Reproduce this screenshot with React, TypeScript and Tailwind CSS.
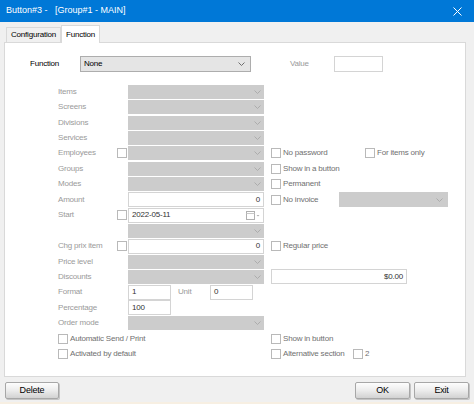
import type { ReactNode } from "react";

const font = { fontFamily: '"Liberation Sans", Arial, sans-serif' };

function Chevron({ color = "#a8a8a8" }: { color?: string }) {
  return (
    <svg width="7" height="4" viewBox="0 0 7 4" className="shrink-0">
      <path d="M0.5 0.5L3.5 3.5L6.5 0.5" fill="none" stroke={color} strokeWidth="0.9" />
    </svg>
  );
}

function Check() {
  return <span className="block h-[10px] w-[10px] shrink-0 border border-[#b9b9b9] bg-white" />;
}

function GraySelect({ className = "w-[136px]" }: { className?: string }) {
  return (
    <div className={`flex h-[14px] items-center justify-end bg-[#cccccc] pr-[3px] ${className}`}>
      <Chevron />
    </div>
  );
}

function TextBox({ value, className = "w-[136px]", right = false }: { value: string; className?: string; right?: boolean }) {
  return (
    <div
      className={`flex h-[15px] items-center border border-[#d4d4d4] bg-white px-[3px] text-[#333] ${right ? "justify-end" : ""} ${className}`}
    >
      {value}
    </div>
  );
}

function CheckLabel({ label, className = "" }: { label: string; className?: string }) {
  return (
    <div className={`flex items-center gap-[2px] text-[#707070] ${className}`}>
      <Check />
      <span>{label}</span>
    </div>
  );
}

function Row({ label, check, control, side }: { label?: ReactNode; check?: boolean; control?: ReactNode; side?: ReactNode }) {
  return (
    <div className="flex h-[15.45px] items-center">
      <div className="w-[59px] shrink-0 text-[#9a9a9a]">{label}</div>
      <div className="w-[11px] shrink-0">{check && <Check />}</div>
      <div className="flex w-[136px] shrink-0 items-center">{control}</div>
      <div className="ml-[7px] flex items-center">{side}</div>
    </div>
  );
}

function DateBox() {
  return (
    <div className="flex h-[15px] w-[136px] items-center border border-[#d4d4d4] bg-white pl-[3px] pr-[3px] text-[#333]">
      <span className="flex-1">2022-05-11</span>
      <svg width="14" height="9" viewBox="0 0 14 9">
        <rect x="0.5" y="0.5" width="8" height="8" fill="none" stroke="#b0b0b0" />
        <line x1="0.5" y1="2.5" x2="8.5" y2="2.5" stroke="#c8c8c8" />
        <path d="M10.5 4L12 5.5L13.5 4Z" fill="#b0b0b0" />
      </svg>
    </div>
  );
}

function WinButton({ label, className = "" }: { label: string; className?: string }) {
  return (
    <button
      className={`h-[17px] rounded-[2px] border border-[#a7a7a7] bg-gradient-to-b from-[#fdfdfd] via-[#ececec] to-[#d2d2d2] text-[9px] text-black shadow-[1px_1px_0_#c4c4c4] ${className}`}
    >
      {label}
    </button>
  );
}

export default function App() {
  return (
    <div className="flex h-[404px] w-[474px] flex-col overflow-hidden bg-[#f0f0f0] text-[8px] tracking-[-0.2px]" style={font}>
      {/* title bar */}
      <div className="flex h-[22px] shrink-0 items-center bg-[#0078d7] pl-[6px] pr-[12px] text-[9px] tracking-normal text-white">
        <span className="flex-1 whitespace-pre">Button#3 -   [Group#1 - MAIN]</span>
        <svg width="9" height="9" viewBox="0 0 9 9">
          <path d="M0.5 0.5L8.5 8.5M8.5 0.5L0.5 8.5" stroke="#fff" strokeWidth="1" />
        </svg>
      </div>

      {/* tabs */}
      <div className="flex h-[20px] shrink-0 items-end pl-[6px]">
        <div className="flex h-[15px] items-center border border-b-0 border-[#d9d9d9] bg-[#f0f0f0] px-[4px] text-black">
          Configuration
        </div>
        <div className="relative -mb-px flex h-[18px] items-center border border-b-0 border-[#d9d9d9] bg-white px-[4px] text-black">
          Function
        </div>
      </div>

      {/* tab page */}
      <div className="ml-[4px] h-[335px] w-[462px] shrink-0 border border-[#d9d9d9] bg-white pt-[13px]">
        <div className="flex h-[16px] items-center">
          <div className="w-[75px] shrink-0 pl-[25px] text-black">Function</div>
          <div className="flex h-[16px] w-[171px] items-center border border-[#adadad] bg-[#e5e5e5] pl-[3px] pr-[5px] text-black">
            <span className="flex-1">None</span>
            <Chevron color="#606060" />
          </div>
          <div className="ml-[39px] w-[44px] text-[#9a9a9a]">Value</div>
          <div className="h-[16px] w-[49px] border border-[#d4d4d4] bg-white" />
        </div>

        <div className="mt-[12px] pl-[53px]">
          <Row label="Items" control={<GraySelect />} />
          <Row label="Screens" control={<GraySelect />} />
          <Row label="Divisions" control={<GraySelect />} />
          <Row label="Services" control={<GraySelect />} />
          <Row
            label="Employees"
            check
            control={<GraySelect />}
            side={
              <>
                <CheckLabel label="No password" className="w-[94px]" />
                <CheckLabel label="For items only" />
              </>
            }
          />
          <Row label="Groups" control={<GraySelect />} side={<CheckLabel label="Show in a button" />} />
          <Row label="Modes" control={<GraySelect />} side={<CheckLabel label="Permanent" />} />
          <Row
            label="Amount"
            control={<TextBox value="0" right />}
            side={
              <>
                <CheckLabel label="No invoice" className="w-[68px]" />
                <GraySelect className="h-[15px] w-[109px] pr-[5px]" />
              </>
            }
          />
          <Row label="Start" check control={<DateBox />} />
          <Row control={<GraySelect />} />
          <Row label="Chg prix item" check control={<TextBox value="0" right />} side={<CheckLabel label="Regular price" />} />
          <Row label="Price level" control={<GraySelect />} />
          <Row label="Discounts" control={<GraySelect />} side={<TextBox value="$0.00" right className="w-[136px]" />} />
          <Row
            label="Format"
            control={
              <>
                <TextBox value="1" className="w-[43px]" />
                <span className="ml-[7px] w-[32px] text-[#9a9a9a]">Unit</span>
                <TextBox value="0" className="w-[43px]" />
              </>
            }
          />
          <Row label="Percentage" control={<TextBox value="100" className="w-[43px]" />} />
          <Row label="Order mode" control={<GraySelect />} />
          <div className="flex h-[15.45px] items-center">
            <CheckLabel label="Automatic Send / Print" className="w-[213px]" />
            <CheckLabel label="Show in button" />
          </div>
          <div className="flex h-[15.45px] items-center">
            <CheckLabel label="Activated by default" className="w-[213px]" />
            <CheckLabel label="Alternative section" className="w-[82px]" />
            <CheckLabel label="2" />
          </div>
        </div>
      </div>

      {/* buttons */}
      <div className="mt-[5px] flex items-center pl-[5px] pr-[5px]">
        <WinButton label="Delete" className="w-[54px]" />
        <div className="flex-1" />
        <WinButton label="OK" className="w-[55px]" />
        <WinButton label="Exit" className="ml-[4px] w-[55px]" />
      </div>
      <div className="mt-auto h-[2px] bg-[#f7efe2]" />
    </div>
  );
}
